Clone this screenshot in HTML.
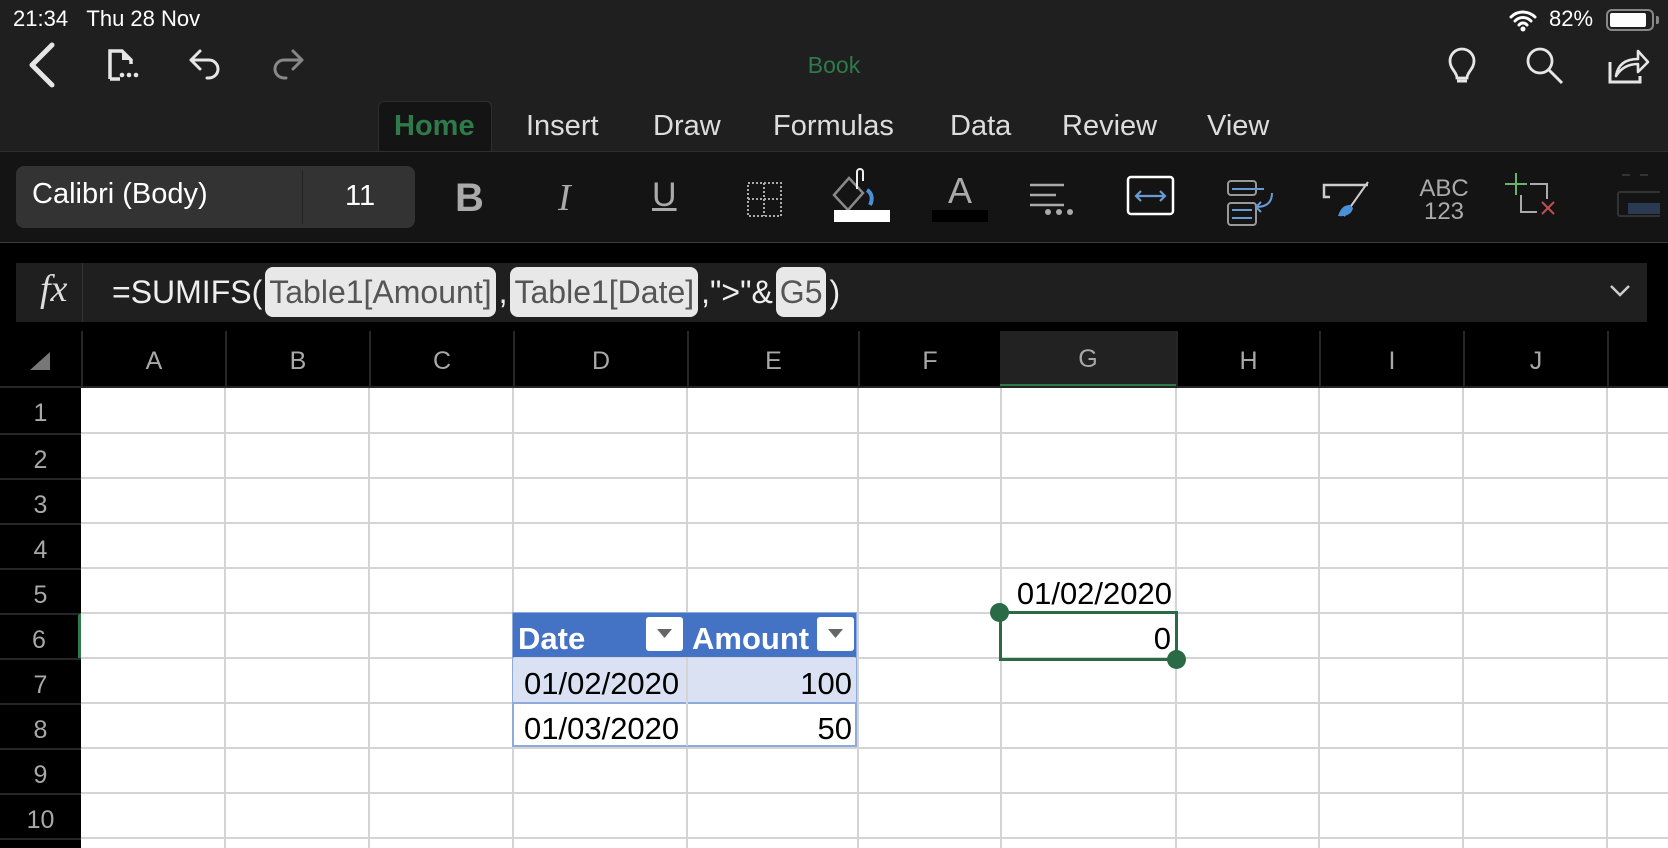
<!DOCTYPE html>
<html><head><meta charset="utf-8"><style>
*{margin:0;padding:0;box-sizing:border-box}
body{width:1668px;height:848px;overflow:hidden;background:#000;font-family:"Liberation Sans",sans-serif;position:relative}
.a{position:absolute}
.n{font-family:"Liberation Sans Narrow","Liberation Sans",sans-serif}
.ch{position:absolute;top:331px;height:57px;color:#a8a8a8;font-size:25px;line-height:61px;text-align:center;border-left:2px solid #262626}
.rh{position:absolute;left:0;width:81px;color:#a8a8a8;font-size:25px;text-align:center;border-top:2px solid #262626}
.vl{position:absolute;top:388px;height:460px;width:2px;background:#d4d4d4}
.hl{position:absolute;left:81px;width:1587px;height:2px;background:#d4d4d4}
.tx{position:absolute;font-size:31px;color:#000;line-height:49px}
.pill{display:inline-block;background:#e8e8e8;color:#555;border-radius:8px;padding:0 4px;height:50px;line-height:50px}
</style></head><body>
<div class="a" style="left:0;top:0;width:1668px;height:151px;background:#1f1f1f"></div>
<div class="a" style="left:13px;top:6px;color:#fff;font-size:22px">21:34&nbsp;&nbsp;&nbsp;Thu 28 Nov</div>
<svg class="a" style="left:1508px;top:8px" width="30" height="24" viewBox="0 0 30 24"><path d="M3 9a17 17 0 0 1 24 0M7 13a11 11 0 0 1 16 0M11 17a5 5 0 0 1 8 0" stroke="#fff" stroke-width="3" fill="none" stroke-linecap="round"/><circle cx="15" cy="21" r="2.5" fill="#fff"/></svg>
<div class="a" style="left:1549px;top:6px;color:#fff;font-size:22px">82%</div>
<div class="a" style="left:1606px;top:9px;width:48px;height:22px;border:2px solid #888;border-radius:6px"><div style="margin:2px;width:36px;height:14px;background:#fff;border-radius:2px"></div></div>
<div class="a" style="left:1656px;top:16px;width:3px;height:8px;background:#888;border-radius:0 2px 2px 0"></div>
<svg class="a" style="left:0;top:36px" width="340" height="60" viewBox="0 36 340 60">
<path d="M52 45L32 65L52 85" stroke="#e6e6e6" stroke-width="5" fill="none" stroke-linecap="round" stroke-linejoin="round"/>
<path d="M110 79V51h12l9 9v4" stroke="#e6e6e6" stroke-width="3.5" fill="none"/><path d="M122 51v9h9z" fill="#e6e6e6"/><path d="M110 79h10" stroke="#e6e6e6" stroke-width="3.5"/>
<circle cx="122" cy="75" r="2.3" fill="#e6e6e6"/><circle cx="129" cy="75" r="2.3" fill="#e6e6e6"/><circle cx="136" cy="75" r="2.3" fill="#e6e6e6"/>
<path d="M200 51l-9 9 9 9M191 60h18a9 9 0 0 1 0 18h-2" stroke="#e6e6e6" stroke-width="3" fill="none" stroke-linecap="round" stroke-linejoin="round"/>
<path d="M293 51l9 9-9 9M302 60h-18a9 9 0 0 0 0 18h2" stroke="#888" stroke-width="3" fill="none" stroke-linecap="round" stroke-linejoin="round"/>
</svg>
<div class="a" style="left:0;width:1668px;top:52px;text-align:center;color:#2f7a4a;font-size:23px">Book</div>
<svg class="a" style="left:1440px;top:44px" width="220" height="42" viewBox="1440 44 220 42">
<path d="M1457 78c0-6-7-9-7-17a12 12 0 0 1 24 0c0 8-7 11-7 17z" stroke="#e6e6e6" stroke-width="2.8" fill="none"/><path d="M1457 81h10" stroke="#e6e6e6" stroke-width="3"/>
<circle cx="1540" cy="61" r="12" stroke="#e6e6e6" stroke-width="2.8" fill="none"/><path d="M1549 70l13 13" stroke="#e6e6e6" stroke-width="3"/>
<path d="M1610 62v20h30v-6" stroke="#e6e6e6" stroke-width="3" fill="none"/><path d="M1616 76c2-12 10-17 22-17v-8l10 11-10 10v-8c-10 0-17 4-22 12z" stroke="#e6e6e6" stroke-width="2.6" fill="none" stroke-linejoin="round"/>
</svg>
<div class="a" style="left:378px;top:101px;width:114px;height:51px;background:#141414;border-radius:6px 6px 0 0;border:1px solid #2e2e2e;border-bottom:none"></div>
<div class="a" style="top:110px;font-size:29px;color:#ddd;width:1668px;height:40px">
<span class="a" style="left:394px;color:#2f7a4a;font-weight:bold">Home</span>
<span class="a" style="left:526px">Insert</span>
<span class="a" style="left:653px">Draw</span>
<span class="a" style="left:773px">Formulas</span>
<span class="a" style="left:950px">Data</span>
<span class="a" style="left:1062px">Review</span>
<span class="a" style="left:1207px">View</span>
</div>
<div class="a" style="left:0;top:151px;width:1668px;height:92px;background:#141414;border-top:1px solid #2e2e2e;border-bottom:1px solid #3a3a3a"></div>
<div class="a" style="left:16px;top:166px;width:399px;height:62px;background:#333;border-radius:8px"></div>
<div class="a" style="left:302px;top:170px;width:1px;height:54px;background:#222"></div>
<div class="a" style="left:32px;top:178px;color:#fff;font-size:29px">Calibri (Body)</div>
<div class="a" style="left:345px;top:180px;color:#fff;font-size:29px">11</div>
<div class="a" style="left:455px;top:176px;color:#aaa;font-size:40px;font-weight:bold">B</div>
<div class="a" style="left:558px;top:176px;color:#aaa;font-size:38px;font-family:'Liberation Serif',serif;font-style:italic">I</div>
<div class="a" style="left:652px;top:176px;color:#aaa;font-size:34px;text-decoration:underline">U</div>
<svg class="a" style="left:740px;top:160px" width="920" height="75" viewBox="740 160 920 75">
<g stroke="#aaa" stroke-width="2" stroke-dasharray="2 2" fill="none"><rect x="748" y="183" width="33" height="33"/><path d="M764 183v33M748 199h33"/></g>
<path d="M849 178l-15 17 14 15 15-17z" stroke="#888" stroke-width="2.5" fill="none"/><path d="M863 181v-9a3 3 0 0 0-6 0v17" stroke="#eee" stroke-width="2" fill="none"/><path d="M867 190c5 3 6 9 3 15" stroke="#4a90d9" stroke-width="4" fill="none"/>
<rect x="834" y="210" width="56" height="12" fill="#fff"/>
<text x="960" y="203" font-size="36" fill="#aaa" text-anchor="middle" font-family="Liberation Sans">A</text>
<rect x="932" y="210" width="56" height="12" fill="#000"/>
<g stroke="#aaa" stroke-width="2.5"><path d="M1030 185h34M1030 195h26M1030 205h34"/></g>
<g fill="#aaa"><circle cx="1048" cy="212" r="3"/><circle cx="1059" cy="212" r="3"/><circle cx="1070" cy="212" r="3"/></g>
<rect x="1128" y="177" width="45" height="37" rx="3" stroke="#fff" stroke-width="2.5" fill="none"/><path d="M1136 196h29M1141 191l-5 5 5 5M1160 191l5 5-5 5" stroke="#6a9ad0" stroke-width="2.2" fill="none"/>
<rect x="1228" y="181" width="28" height="14" rx="3" stroke="#999" stroke-width="2" fill="none"/><rect x="1228" y="203" width="28" height="22" rx="3" stroke="#999" stroke-width="2" fill="none"/><path d="M1232 189h32M1232 210h20M1232 218h20M1272 193c0 10-6 14-16 14M1261 202l-5 5 5 5" stroke="#6a9ad0" stroke-width="2" fill="none"/>
<path d="M1330 197h-6v-12h44" stroke="#ccc" stroke-width="2.5" fill="none"/><path d="M1368 182l-24 34" stroke="#ccc" stroke-width="2"/><path d="M1350 205c-8 0-10 6-12 11 8 1 14-2 15-8z" fill="#4a90d9"/>
<text x="1444" y="196" font-size="24" fill="#aaa" text-anchor="middle" font-family="Liberation Sans">ABC</text>
<text x="1444" y="219" font-size="24" fill="#aaa" text-anchor="middle" font-family="Liberation Sans">123</text>
<path d="M1516 173v22M1505 184h22" stroke="#6ab36a" stroke-width="2"/><path d="M1530 184h17v15M1521 195v17h16" stroke="#aaa" stroke-width="2" fill="none"/><path d="M1542 202l12 12M1554 202l-12 12" stroke="#c05050" stroke-width="2"/>
<path d="M1622 175h8M1640 175h8" stroke="#333" stroke-width="2"/>
<rect x="1618" y="192" width="44" height="24" rx="2" stroke="#333" stroke-width="2" fill="none"/><rect x="1628" y="203" width="34" height="11" fill="#2a3a50"/>
</svg>
<div class="a" style="left:16px;top:263px;width:1631px;height:59px;background:#1f1f1f"></div>
<div class="a" style="left:82px;top:263px;width:1px;height:59px;background:#333"></div>
<div class="a" style="left:40px;top:267px;color:#ddd;font-size:38px;font-family:'Liberation Serif',serif;font-style:italic">fx</div>
<div class="a n" style="left:112px;top:267px;color:#eee;font-size:32px;line-height:50px;white-space:nowrap">=SUMIFS(<span class="pill" style="margin:0 3px 0 3px">Table1[Amount]</span>,<span class="pill" style="margin:0 3px">Table1[Date]</span>,"&gt;"&amp;<span class="pill" style="margin:0 3px">G5</span>)</div>
<svg class="a" style="left:1608px;top:282px" width="24" height="16"><path d="M3 4l9 9 9-9" stroke="#ccc" stroke-width="2.5" fill="none"/></svg>
<div class="a" style="left:0;top:331px;width:1668px;height:57px;background:#000"></div>
<svg class="a" style="left:28px;top:350px" width="24" height="22"><path d="M22 2V20H2z" fill="#777"/></svg>
<div class="ch" style="left:81px;width:144px">A</div>
<div class="ch" style="left:225px;width:144px">B</div>
<div class="ch" style="left:369px;width:144px">C</div>
<div class="ch" style="left:513px;width:174px">D</div>
<div class="ch" style="left:687px;width:171px">E</div>
<div class="ch" style="left:858px;width:142px">F</div>
<div class="ch" style="left:1000px;width:176px;background:#222;border-left:none;border-bottom:4px solid #2f7a4a;line-height:57px">G</div>
<div class="ch" style="left:1176px;width:143px">H</div>
<div class="ch" style="left:1319px;width:144px">I</div>
<div class="ch" style="left:1463px;width:144px">J</div>
<div class="ch" style="left:1607px;width:61px"></div>
<div class="a" style="left:0;top:386px;width:1668px;height:2px;background:#262626"></div>
<div class="a" style="left:81px;top:388px;width:1587px;height:460px;background:#fff"></div>
<div class="vl" style="left:224px"></div><div class="vl" style="left:368px"></div><div class="vl" style="left:512px"></div><div class="vl" style="left:686px"></div><div class="vl" style="left:857px"></div><div class="vl" style="left:1000px"></div><div class="vl" style="left:1175px"></div><div class="vl" style="left:1318px"></div><div class="vl" style="left:1462px"></div><div class="vl" style="left:1606px"></div>
<div class="hl" style="top:432px"></div><div class="hl" style="top:477px"></div><div class="hl" style="top:522px"></div><div class="hl" style="top:567px"></div><div class="hl" style="top:612px"></div><div class="hl" style="top:657px"></div><div class="hl" style="top:702px"></div><div class="hl" style="top:747px"></div><div class="hl" style="top:792px"></div><div class="hl" style="top:837px"></div>
<div class="rh" style="top:388px;height:45px;line-height:51px;border-top:none">1</div>
<div class="rh" style="top:433px;height:45px;line-height:51px">2</div>
<div class="rh" style="top:478px;height:45px;line-height:51px">3</div>
<div class="rh" style="top:523px;height:45px;line-height:51px">4</div>
<div class="rh" style="top:568px;height:45px;line-height:51px">5</div>
<div class="rh" style="top:613px;height:45px;line-height:51px;border-right:3px solid #2f7a4a">6</div>
<div class="rh" style="top:658px;height:45px;line-height:51px">7</div>
<div class="rh" style="top:703px;height:45px;line-height:51px">8</div>
<div class="rh" style="top:748px;height:45px;line-height:51px">9</div>
<div class="rh" style="top:793px;height:45px;line-height:51px">10</div>
<div class="rh" style="top:838px;height:10px"></div>
<div class="a" style="left:512px;top:612px;width:345px;height:135px;border:2px solid #8eaadb"></div>
<div class="a" style="left:513px;top:613px;width:343px;height:44px;background:#4472c4"></div>
<div class="a" style="left:513px;top:658px;width:343px;height:44px;background:#d9e1f2"></div>
<div class="a" style="left:513px;top:702px;width:343px;height:2px;background:#8eaadb"></div>
<div class="a" style="left:686px;top:658px;width:2px;height:88px;background:#d4d4d4"></div>
<div class="tx n" style="left:518px;top:614px;color:#fff;font-weight:bold">Date</div>
<div class="a" style="left:646px;top:617px;width:37px;height:34px;background:#fff;border-radius:3px"><svg width="37" height="34"><path d="M11 12h15l-7.5 9z" fill="#666"/></svg></div>
<div class="tx n" style="left:692px;top:614px;color:#fff;font-weight:bold">Amount</div>
<div class="a" style="left:817px;top:617px;width:37px;height:34px;background:#fff;border-radius:3px"><svg width="37" height="34"><path d="M11 12h15l-7.5 9z" fill="#666"/></svg></div>
<div class="tx n" style="left:524px;top:659px">01/02/2020</div>
<div class="tx n" style="left:690px;top:659px;width:162px;text-align:right">100</div>
<div class="tx n" style="left:524px;top:704px">01/03/2020</div>
<div class="tx n" style="left:690px;top:704px;width:162px;text-align:right">50</div>
<div class="tx n" style="left:1000px;top:569px;width:172px;text-align:right">01/02/2020</div>
<div class="a" style="left:999px;top:611px;width:179px;height:50px;border:3px solid #2a6b45"></div>
<div class="tx n" style="left:1000px;top:614px;width:171px;text-align:right">0</div>
<div class="a" style="left:990px;top:603px;width:19px;height:19px;border-radius:50%;background:#2a6b45"></div>
<div class="a" style="left:1167px;top:650px;width:19px;height:19px;border-radius:50%;background:#2a6b45"></div>
</body></html>
